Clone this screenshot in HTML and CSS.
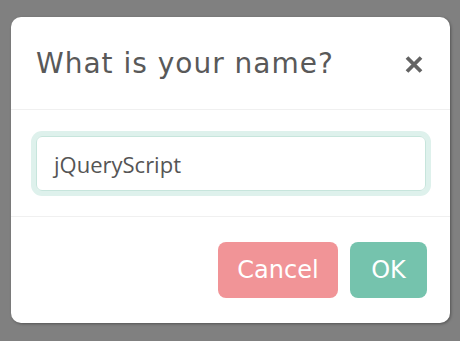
FILE: index.html
```html
<!DOCTYPE html>
<html>
<head>
<meta charset="utf-8">
<link rel="stylesheet" href="styles.css">
</head>
<body>
<div class="modal">
  <div class="modal-header">
    <h2 class="modal-title">What is your name?</h2>
    <svg class="close" width="18" height="17" viewBox="0 0 18 17" aria-label="Close">
      <path d="M2 1.5 L16 15.5 M16 1.5 L2 15.5" stroke="#636363" stroke-width="3.8" stroke-linecap="butt" fill="none"/>
    </svg>
  </div>
  <div class="modal-body">
    <div class="input"><span class="input-text">jQueryScript</span></div>
  </div>
  <div class="modal-footer">
    <button class="btn btn-cancel">Cancel</button>
    <button class="btn btn-ok">OK</button>
  </div>
</div>
</body>
</html>
```
FILE: styles.css
```css
html, body {
  margin: 0;
  padding: 0;
  background: #808080;
  height: 100%;
}
body {
  padding: 17px 10px 0 11px;
  box-sizing: border-box;
}
.modal {
  width: 439px;
  height: 306px;
  background: #fff;
  border-radius: 10px;
  box-shadow: 1px 1px 3px rgba(0, 0, 0, 0.35);
  display: flex;
  flex-direction: column;
}
.modal-header {
  height: 93px;
  box-sizing: border-box;
  padding: 0 27px 0 25px;
  display: flex;
  align-items: center;
  justify-content: space-between;
  border-bottom: 1px solid #f0f0f0;
}
.modal-title {
  margin: 0;
  font-family: "DejaVu Sans", sans-serif;
  font-weight: 400;
  font-size: 28px;
  color: #595959;
  letter-spacing: 1px;
  padding-top: 1px;
}
.close {
  display: block;
  margin-top: 2px;
}
.modal-body {
  padding: 26px 24px 25px 25px;
  border-bottom: 1px solid #f0f0f0;
}
.input {
  height: 55px;
  box-sizing: border-box;
  border: 1px solid #c7e5dc;
  border-radius: 6px;
  box-shadow: 0 0 0 5px #def1ec;
  display: flex;
  align-items: center;
  font-family: "Open Sans", sans-serif;
  font-size: 22px;
  color: #555;
}
.input-text {
  margin-left: 17px;
}
.modal-footer {
  flex: 1;
  display: flex;
  justify-content: flex-end;
  align-items: flex-start;
  gap: 12px;
  padding: 25px 23px 0 0;
}
.btn {
  height: 56px;
  border: none;
  border-radius: 8px;
  color: #fff;
  font-family: "DejaVu Sans", sans-serif;
  font-size: 24px;
  padding: 0;
}
.btn-cancel {
  width: 120px;
  background: #f19497;
}
.btn-ok {
  width: 77px;
  background: #75c3ad;
}
```
